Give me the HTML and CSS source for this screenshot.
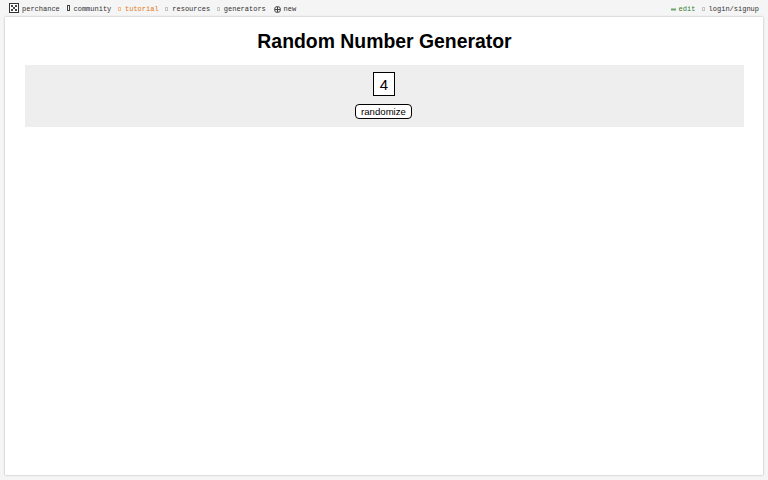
FILE: index.html
```html
<!DOCTYPE html>
<html lang="en">
<head>
    <meta charset="UTF-8">
    <meta name="viewport" content="width=device-width, initial-scale=1.0">
    <title>Random Number Generator</title>
    <link rel="stylesheet" href="styles.css">
</head>
<body>
    <nav class="topbar">
        <div class="nav-group">
            <a class="nav-link nav-home">
                <svg class="dice" width="10" height="10" viewBox="0 0 10 10">
                    <rect x="0.5" y="0.5" width="9" height="9" fill="#fff" stroke="#333"/>
                    <rect x="2" y="2" width="2" height="2" fill="#444"/>
                    <rect x="6" y="2" width="2" height="2" fill="#444"/>
                    <rect x="4" y="4" width="2" height="2" fill="#444"/>
                    <rect x="2" y="6" width="2" height="2" fill="#444"/>
                    <rect x="6" y="6" width="2" height="2" fill="#444"/>
                </svg>
                <span>perchance</span>
            </a>
            <a class="nav-link"><i class="tofu tofu-dark"></i><span>community</span></a>
            <a class="nav-link nav-tutorial"><i class="tofu tofu-orange"></i><span>tutorial</span></a>
            <a class="nav-link"><i class="tofu"></i><span>resources</span></a>
            <a class="nav-link"><i class="tofu"></i><span>generators</span></a>
            <a class="nav-link nav-new">
                <svg width="7" height="7" viewBox="0 0 7 7">
                    <circle cx="3.5" cy="3.5" r="3" fill="none" stroke="#444"/>
                    <path d="M3.5 1V6M1 3.5H6" stroke="#444"/>
                </svg>
                <span>new</span>
            </a>
        </div>
        <div class="nav-group">
            <a class="nav-link nav-edit">
                <svg width="5" height="3" viewBox="0 0 5 3"><path d="M0 1.5H5" stroke="#6aa56a" stroke-width="2"/></svg>
                <span>edit</span>
            </a>
            <a class="nav-link"><i class="tofu"></i><span>login/signup</span></a>
        </div>
    </nav>

    <main class="card">
        <h1>Random Number Generator</h1>
        <section class="panel">
            <div class="output">4</div>
            <button class="randomize">randomize</button>
        </section>
    </main>
</body>
</html>
```
FILE: styles.css
```css
html, body {
    height: 100%;
}
body {
    margin: 0;
    background: #f5f5f5;
    font-family: "Liberation Sans", Arial, sans-serif;
    color: #000;
    display: flex;
    flex-direction: column;
    overflow: hidden;
}
.topbar {
    height: 17px;
    box-sizing: border-box;
    padding: 1px 9px 0;
    display: flex;
    justify-content: space-between;
    align-items: center;
    font-family: "Liberation Mono", monospace;
    font-size: 7px;
    color: #333;
}
.nav-group {
    display: flex;
    align-items: center;
    gap: 6.7px;
}
.nav-link {
    display: flex;
    align-items: center;
    gap: 3px;
}
.nav-home svg {
    margin-top: -2px;
}
.nav-new {
    margin-left: 1px;
}
.nav-tutorial {
    color: #e07a20;
}
.nav-edit {
    margin-right: -0.5px;
    color: #2e7d32;
}
.tofu {
    display: block;
    width: 3px;
    height: 4px;
    margin-right: 1px;
    box-sizing: border-box;
    border: 1px solid #c4c4c4;
}
.tofu-dark {
    height: 6px;
    margin-top: -2px;
    border-color: #444;
}
.tofu-orange {
    border-color: #f0c090;
}
.card {
    flex: 1;
    margin: 0 5px 5px;
    padding: 0 19px 0 20px;
    background: #fff;
    box-shadow: 0 0 2px rgba(0, 0, 0, 0.3);
}
h1 {
    margin: 12px 0;
    font-size: 19.4px;
    line-height: 24px;
    text-align: center;
}
.panel {
    height: 62px;
    padding-top: 7px;
    box-sizing: border-box;
    background: #eee;
    display: flex;
    flex-direction: column;
    align-items: center;
    gap: 8px;
}
.output {
    width: 22px;
    height: 24px;
    margin-right: 1px;
    box-sizing: border-box;
    border: 1px solid #000;
    background: #fff;
    font-size: 15px;
    line-height: 24px;
    text-align: center;
}
.randomize {
    width: 57px;
    height: 15px;
    margin-right: 2px;
    padding: 0;
    background: #fff;
    border: 1.5px solid #000;
    border-radius: 4px;
    font-family: "Liberation Sans", Arial, sans-serif;
    font-size: 9.6px;
    color: #000;
}
```
